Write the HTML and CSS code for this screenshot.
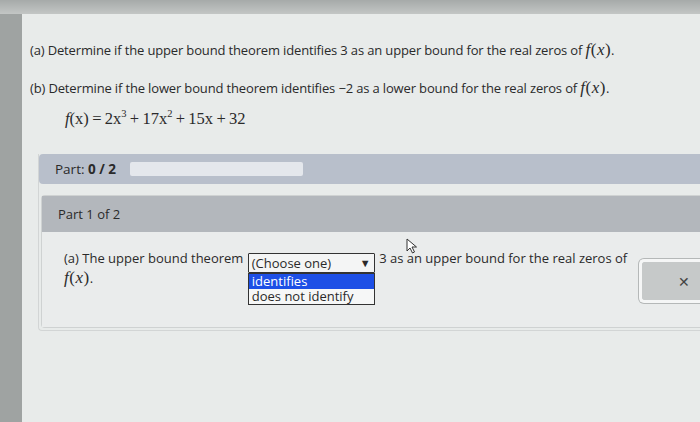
FILE: index.html
```html
<!DOCTYPE html>
<html>
<head>
<meta charset="utf-8">
<link rel="stylesheet" href="styles.css">
</head>
<body>
<div class="screen">
  <div class="topstrip"></div>
  <div class="row">
    <div class="leftstrip"></div>
    <div class="page">
      <div class="question">
        <p class="q">(a) Determine if the upper bound theorem identifies 3 as an upper bound for the real zeros of <span class="mr"><i>f</i>(<i>x</i>)</span>.</p>
        <p class="q">(b) Determine if the lower bound theorem identifies &minus;2 as a lower bound for the real zeros of <span class="mr"><i>f</i>(<i>x</i>)</span>.</p>
        <p class="formula"><i>f</i>(x)&thinsp;=&thinsp;2x<sup>3</sup>&thinsp;+&thinsp;17x<sup>2</sup>&thinsp;+&thinsp;15x&thinsp;+&thinsp;32</p>
      </div>
      <div class="parts">
        <div class="partbar"><span>Part: <b>0 / 2</b></span><div class="progress"></div></div>
        <div class="partcard">
          <div class="parthead">Part 1 of 2</div>
          <div class="partbody">
            <div class="answer">
              <div class="line">(a) The upper bound theorem
                <span class="selectwrap">
                  <span class="select">(Choose one)<span class="arrow">&#9660;</span></span>
                  <span class="menu">
                    <span class="opt sel">identifies</span>
                    <span class="opt">does not identify</span>
                  </span>
                </span>
                3 as an upper bound for the real zeros of
              </div>
              <div class="line"><span class="mr"><i>f</i>(<i>x</i>)</span>.</div>
            </div>
            <div class="xbtn">&#x2715;</div>
            <svg class="cursor" width="12" height="16" viewBox="0 0 12 16"><path d="M1 1 L1 13 L4 10 L6.5 15 L8.5 14 L6 9 L10.5 9 Z" fill="#fff" stroke="#333" stroke-width="1"/></svg>
          </div>
        </div>
      </div>
    </div>
  </div>
</div>
</body>
</html>
```
FILE: styles.css
```css
html, body { margin: 0; padding: 0; }
body {
  width: 700px; height: 422px; overflow: hidden;
  background: #e6e8e8;
  font-family: "Open Sans", "Liberation Sans", sans-serif;
  color: #2a2a2a;
}
.screen { display: flex; flex-direction: column; height: 422px; }
.topstrip { height: 14px; background: linear-gradient(#a6aaa9, #c3c6c5); flex: none; }
.row { display: flex; flex: 1; }
.leftstrip { width: 22px; background: #9fa3a2; flex: none; }
.page { flex: 1; background: #e8ebea; padding-left: 8px; }
.question { padding-top: 26px; }
.q { margin: 0 0 18px 0; font-size: 13px; line-height: 20px; letter-spacing: -0.15px; }
.mr { font-family: "Liberation Serif", serif; font-size: 17px; letter-spacing: 0.5px; }
.formula { margin: -8px 0 0 35px; font-family: "Liberation Serif", serif; font-size: 16.5px; line-height: 22px; }
.formula sup { font-size: 10.5px; vertical-align: 7px; line-height: 0; }
.parts { margin: 24px 0 0 8px; border: 1px solid #d2d5d5; border-right: none; border-top: none; height: 176px; border-radius: 0 0 0 4px; }
.partbar {
  background: #b8bfcb; height: 30px; border-radius: 4px 0 0 4px;
  display: flex; align-items: center; padding-left: 16px; gap: 14px;
  font-size: 13.5px;
}
.progress { width: 173px; height: 14px; background: #e4e7ec; border-radius: 2px; }
.partcard { margin-top: 11px; margin-left: 2px; border: 1px solid #cfd2d2; border-right: none; border-radius: 4px 0 0 4px; }
.parthead { background: #b3b7bc; height: 36px; display: flex; align-items: center; padding-left: 16px; font-size: 13px; }
.partbody { position: relative; height: 95px; background: #eaecec; }
.answer { padding: 16px 0 0 22px; font-size: 13px; }
.line { height: 20px; line-height: 20px; }
.selectwrap { position: relative; display: inline-block; width: 127px; height: 18px; vertical-align: -5px; margin: 0 1px; }
.select {
  display: flex; justify-content: space-between; align-items: center;
  border: 1.5px solid #333; background: #f4f5f5; height: 18px; padding: 0 3px 0 3px;
  line-height: 18px; border-radius: 1px;
}
.arrow { font-size: 11px; }
.menu { position: absolute; left: 0; top: 20px; width: 125px; border: 1px solid #333; background: #f6f7f7; display: flex; flex-direction: column; z-index: 2; }
.opt { height: 15px; line-height: 15px; padding-left: 3px; }
.opt.sel { background: #1d4fe6; color: #fff; }
.xbtn {
  position: absolute; right: 0; top: 27px; width: 48px; height: 38px;
  background: #c6c9c9; border: 3px solid #f5f6f6; border-right: none; border-radius: 5px 0 0 5px;
  box-shadow: 0 0 0 1px #b5b8b8;
  display: flex; align-items: center; justify-content: flex-end; padding-right: 10px;
  font-size: 14px; color: #444;
}
.cursor { position: absolute; left: 364px; top: 6px; }
```
